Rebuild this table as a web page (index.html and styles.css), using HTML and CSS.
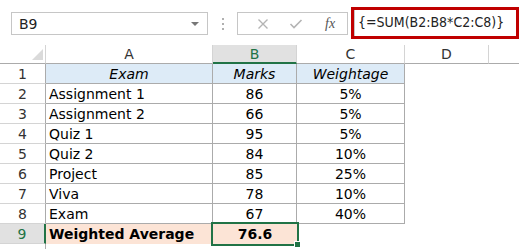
FILE: index.html
```html
<!DOCTYPE html>
<html>
<head>
<meta charset="utf-8">
<link rel="stylesheet" href="styles.css">
</head>
<body>
<div class="toolbar">
  <div class="namebox"><span class="name">B9</span><span class="caret"></span></div>
  <div class="grip"><i></i><i></i><i></i></div>
  <div class="fnbox">
    <svg class="ico" width="12" height="12" viewBox="0 0 12 12"><path d="M1.5 1.5 L10.5 10.5 M10.5 1.5 L1.5 10.5" stroke="#b4b4b4" stroke-width="1.4" fill="none"/></svg>
    <svg class="ico" width="14" height="12" viewBox="0 0 14 12"><path d="M1.5 6 L5 9.5 L12.5 2" stroke="#b4b4b4" stroke-width="1.6" fill="none"/></svg>
    <span class="fx">fx</span>
  </div>
  <div class="formula"><div class="formula-in">{=SUM(B2:B8*C2:C8)}</div></div>
</div>
<div class="sheet">
  <div class="corner"><span class="tri"></span></div>
  <div class="colhdr">A</div>
  <div class="colhdr sel">B</div>
  <div class="colhdr">C</div>
  <div class="colhdr">D</div>
  <div class="colhdr last"></div>

  <div class="rowhdr">1</div>
  <div class="cell data head">Exam</div>
  <div class="cell data head">Marks</div>
  <div class="cell data head">Weightage</div>
  <div class="cell"></div><div class="cell"></div>

  <div class="rowhdr">2</div>
  <div class="cell data">Assignment 1</div>
  <div class="cell data num">86</div>
  <div class="cell data num">5%</div>
  <div class="cell"></div><div class="cell"></div>

  <div class="rowhdr">3</div>
  <div class="cell data">Assignment 2</div>
  <div class="cell data num">66</div>
  <div class="cell data num">5%</div>
  <div class="cell"></div><div class="cell"></div>

  <div class="rowhdr">4</div>
  <div class="cell data">Quiz 1</div>
  <div class="cell data num">95</div>
  <div class="cell data num">5%</div>
  <div class="cell"></div><div class="cell"></div>

  <div class="rowhdr">5</div>
  <div class="cell data">Quiz 2</div>
  <div class="cell data num">84</div>
  <div class="cell data num">10%</div>
  <div class="cell"></div><div class="cell"></div>

  <div class="rowhdr">6</div>
  <div class="cell data">Project</div>
  <div class="cell data num">85</div>
  <div class="cell data num">25%</div>
  <div class="cell"></div><div class="cell"></div>

  <div class="rowhdr">7</div>
  <div class="cell data">Viva</div>
  <div class="cell data num">78</div>
  <div class="cell data num">10%</div>
  <div class="cell"></div><div class="cell"></div>

  <div class="rowhdr">8</div>
  <div class="cell data">Exam</div>
  <div class="cell data num">67</div>
  <div class="cell data num">40%</div>
  <div class="cell"></div><div class="cell"></div>

  <div class="rowhdr sel">9</div>
  <div class="cell total">Weighted Average</div>
  <div class="cell total num active">76.6</div>
  <div class="cell"></div>
  <div class="cell"></div><div class="cell"></div>

  <div class="rowhdr">10</div>
  <div class="cell"></div>
  <div class="cell"></div>
  <div class="cell"></div>
  <div class="cell"></div><div class="cell"></div>
</div>
</body>
</html>
```

FILE: styles.css
```css
* { box-sizing: border-box; }
html, body { margin: 0; padding: 0; background: #fff; }
body {
  width: 519px;
  height: 249px;
  overflow: hidden;
  font-family: "DejaVu Sans", Verdana, sans-serif;
  font-size: 14px;
  color: #000;
}

.toolbar {
  height: 45px;
  display: flex;
  align-items: flex-start;
}
.namebox {
  margin: 12px 0 0 11px;
  width: 197px;
  height: 23px;
  border: 1px solid #c6c6c6;
  display: flex;
  align-items: center;
  justify-content: space-between;
  padding: 0 8px 0 7px;
  color: #222;
}
.name { font-size: 14px; }
.caret {
  width: 0; height: 0;
  border-left: 4px solid transparent;
  border-right: 4px solid transparent;
  border-top: 4px solid #777;
}
.grip {
  margin: 18px 0 0 14px;
  width: 2px;
  display: flex;
  flex-direction: column;
  gap: 3px;
}
.grip i { display: block; width: 2px; height: 2px; background: #b0b0b0; }
.fnbox {
  margin: 12px 0 0 13px;
  width: 111px;
  height: 23px;
  border: 1px solid #c6c6c6;
  display: flex;
  align-items: center;
  padding: 0 0 0 19px;
}
.fnbox .ico:nth-child(2) { margin-left: 20px; }
.fx {
  margin-left: 22px;
  font-family: "Liberation Serif", serif;
  font-style: italic;
  font-size: 14px;
  color: #555;
}
.formula {
  margin: 7px 0 0 3px;
  width: 168px;
  height: 32px;
  border: 3px solid #c00000;
}
.formula-in {
  height: 100%;
  border-left: 1px solid #c6c6c6;
  padding-left: 3px;
  line-height: 25px;
  font-family: "DejaVu Sans Condensed", "DejaVu Sans", sans-serif;
  font-size: 14px;
  color: #222;
  white-space: nowrap;
  overflow: hidden;
}

.sheet {
  display: grid;
  grid-template-columns: 46px 167px 84px 108px 84px 1fr;
  grid-template-rows: 19px repeat(10, 20px);
}
.corner {
  position: relative;
  border-right: 1px solid #d4d4d4;
  border-bottom: 1px solid #ababab;
}
.corner .tri {
  position: absolute;
  right: 2px;
  bottom: 3px;
  width: 0; height: 0;
  border-left: 11px solid transparent;
  border-bottom: 11px solid #dadada;
}
.colhdr {
  border-right: 1px solid #d4d4d4;
  border-bottom: 1px solid #ababab;
  text-align: center;
  line-height: 19px;
  color: #333;
}
.colhdr.sel {
  background: #e1e1e1;
  border-bottom: 2px solid #217346;
  color: #217346;
}
.colhdr.last { border-right: none; }
.rowhdr {
  border-right: 1px solid #ababab;
  border-bottom: 1px solid #d4d4d4;
  text-align: center;
  line-height: 20px;
  color: #333;
}
.rowhdr.sel {
  background: #e1e1e1;
  border-right: 2px solid #217346;
  color: #217346;
}
.cell {
  line-height: 21px;
  padding-left: 3px;
  white-space: nowrap;
}
.data {
  border-right: 1px solid #ababab;
  border-bottom: 1px solid #ababab;
}
.head {
  background: #ddebf7;
  font-style: italic;
  text-align: center;
  padding-left: 0;
}
.num { text-align: center; padding-left: 0; }
.total {
  background: #fce4d6;
  font-weight: bold;
}
.active {
  position: relative;
  outline: 2px solid #217346;
  outline-offset: 0;
}
.active::after {
  content: "";
  position: absolute;
  right: -4px;
  bottom: -4px;
  width: 5px;
  height: 5px;
  background: #217346;
  border: 1px solid #fff;
}
```
